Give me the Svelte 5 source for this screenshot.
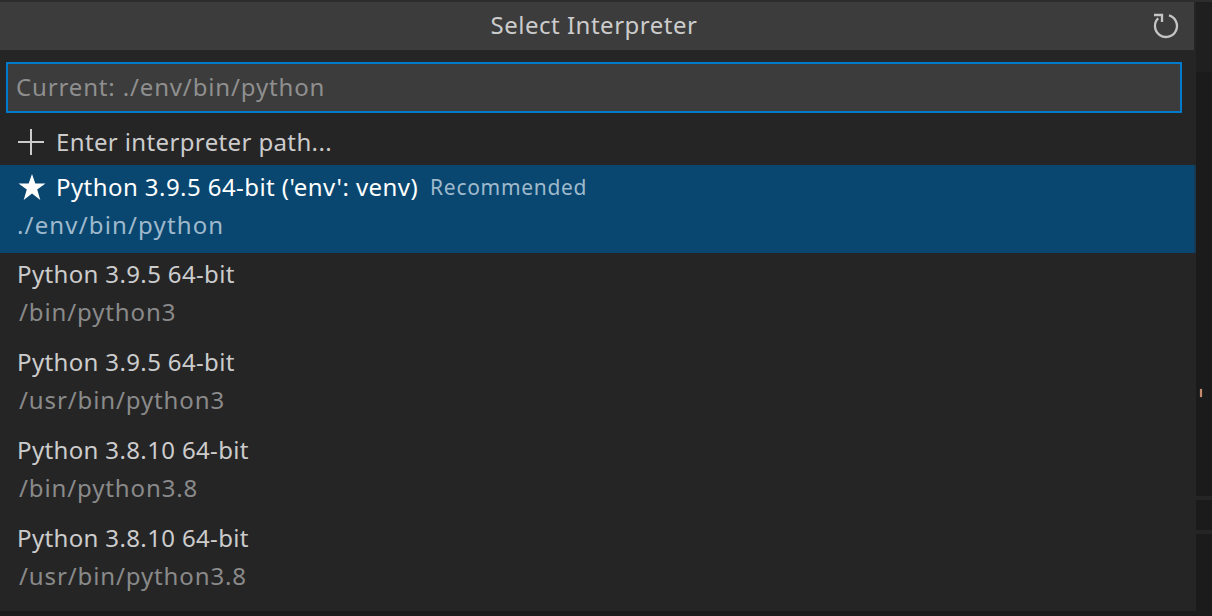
<script>
  const rows = [
    { name: 'Python 3.9.5 64-bit', path: '/bin/python3' },
    { name: 'Python 3.9.5 64-bit', path: '/usr/bin/python3' },
    { name: 'Python 3.8.10 64-bit', path: '/bin/python3.8' },
    { name: 'Python 3.8.10 64-bit', path: '/usr/bin/python3.8' }
  ];
</script>

<div class="page">
  <main class="panel">
    <header class="title">
      <span>Select Interpreter</span>
      <svg class="refresh" viewBox="0 0 28 28" width="28" height="28" fill="none" stroke="#c5c5c5" stroke-width="2.3">
        <path d="M6.2 6.2 A11 11 0 1 0 17 3.4" />
        <path d="M2 3 H10 V10" />
      </svg>
    </header>
    <div class="inputwrap">
      <div class="input">Current: ./env/bin/python</div>
    </div>
    <div class="enter">
      <svg viewBox="0 0 26 26" width="26" height="26" stroke="#cccccc" stroke-width="2"><path d="M0 13H26M13 0V26" /></svg>
      <span>Enter interpreter path...</span>
    </div>
    <div class="row selected">
      <div class="line1">
        <svg viewBox="0 0 28 28" width="28" height="28" fill="#fff"><path d="M14 1 17.3 10.4H27.5L19.2 16.4 22.3 27 14 20.6 5.7 27 8.8 16.4 .5 10.4H10.7Z" /></svg>
        <span class="name">Python 3.9.5 64-bit ('env': venv)</span>
        <span class="rec">Recommended</span>
      </div>
      <div class="path">./env/bin/python</div>
    </div>
    {#each rows as r}
      <div class="row plain">
        <div class="line1"><span class="name">{r.name}</span></div>
        <div class="path">{r.path}</div>
      </div>
    {/each}
  </main>
  <aside class="side">
    <i class="glow"></i>
    <i class="mark"></i>
    <i class="rule one"></i>
    <i class="rule two"></i>
  </aside>
</div>

<style>
  :global(body) { margin: 0; background: #1b1b1b; }
  .page {
    display: flex; width: 1212px; height: 616px; overflow: hidden; box-sizing: border-box;
    border-top: 2px solid #2d2d2d;
    font-family: "Noto Sans", sans-serif; font-size: 24px; color: #cccccc;
    background: #1b1b1b;
  }
  .panel {
    width: 1196px; height: 609px; flex: none; background: #252526;
    display: flex; flex-direction: column;
  }
  .title {
    height: 48px; flex: none; background: #3c3c3c; position: relative; box-sizing: border-box;
    display: flex; align-items: center; justify-content: center; padding: 0 6px 4px 0;
    color: #cccccc; letter-spacing: .5px; width: 1194px;
  }
  .refresh { position: absolute; left: 1152px; top: 10px; }
  .inputwrap { padding: 12px 14px 0 6px; flex: none; }
  .input {
    height: 51px; box-sizing: border-box; background: #3c3c3c; border: 2px solid #007acc;
    padding: 0 0 2px 8px; display: flex; align-items: center; color: #8f8f8f; letter-spacing: .85px;
  }
  .enter {
    height: 45px; margin-top: 7px; flex: none; display: flex; align-items: center; gap: 12px; padding: 0 0 2px 18px;
    box-sizing: border-box; letter-spacing: .37px;
  }
  .row { height: 88px; flex: none; box-sizing: border-box; padding-left: 17px; }
  .line1 { height: 42px; padding-bottom: 2px; display: flex; align-items: center; letter-spacing: .36px; }
  .plain .line1 { margin-top: -1px; }
  .row .path { height: 32px; line-height: 32px; color: #8a8a8a; letter-spacing: .88px; padding-left: 2px; }
  .selected { background: #094771; color: #fff; padding-left: 16px; border-right: 2px solid #153a55; }
  .selected .line1 { letter-spacing: .43px; }
  .selected svg { margin: 2px 10px 0 2px; }
  .selected .path { color: #9fb9cc; letter-spacing: 1.15px; padding-left: 1px; }
  .rec { margin: 1px 0 0 12px; font-size: 21px; color: #9fb9cc; letter-spacing: .7px; }
  .side { flex: 1; position: relative; }
  .glow { position: absolute; left: 0; right: 0; top: 0; height: 70px; background: #1f1f1f; }
  .mark { position: absolute; left: 4px; top: 387px; width: 2px; height: 8px; background: #c58a6e; box-shadow: 0 0 1px #c58a6e; }
  .rule { position: absolute; left: 0; right: 0; height: 4px; background: #252525; }
  .one { top: 494px; }
  .two { top: 528px; }
</style>
